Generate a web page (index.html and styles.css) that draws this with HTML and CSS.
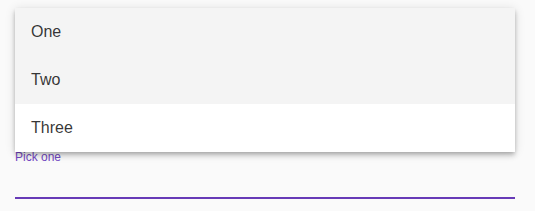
FILE: index.html
```html
<!DOCTYPE html>
<html>
<head>
<meta charset="utf-8">
<link rel="stylesheet" href="styles.css">
</head>
<body>
<div class="page">
  <div class="field">
    <label class="field-label">Pick one</label>
    <div class="field-value"></div>
    <div class="field-underline"></div>
  </div>
  <div class="panel">
    <div class="option active">One</div>
    <div class="option active">Two</div>
    <div class="option">Three</div>
  </div>
</div>
</body>
</html>
```
FILE: styles.css
```css
html, body {
  margin: 0;
  padding: 0;
  background: #fafafa;
  font-family: "Liberation Sans", Arial, sans-serif;
}
.page {
  position: relative;
  width: 535px;
  height: 211px;
}
.field {
  margin-left: 15px;
  width: 500px;
  padding-top: 150px;
}
.field-label {
  display: block;
  font-size: 12px;
  line-height: 14px;
  color: #7448c4;
}
.field-value {
  height: 33px;
}
.field-underline {
  height: 2px;
  background: #673ab7;
}
.panel {
  position: absolute;
  top: 8px;
  left: 15px;
  width: 500px;
  background: #fff;
  box-shadow: 0 2px 4px -1px rgba(0,0,0,.2), 0 4px 5px 0 rgba(0,0,0,.14), 0 1px 10px 0 rgba(0,0,0,.12);
}
.option {
  height: 48px;
  line-height: 48px;
  padding: 0 16px;
  font-size: 16px;
  color: rgba(0,0,0,.8);
}
.option.active {
  background: #f4f4f4;
}
```
